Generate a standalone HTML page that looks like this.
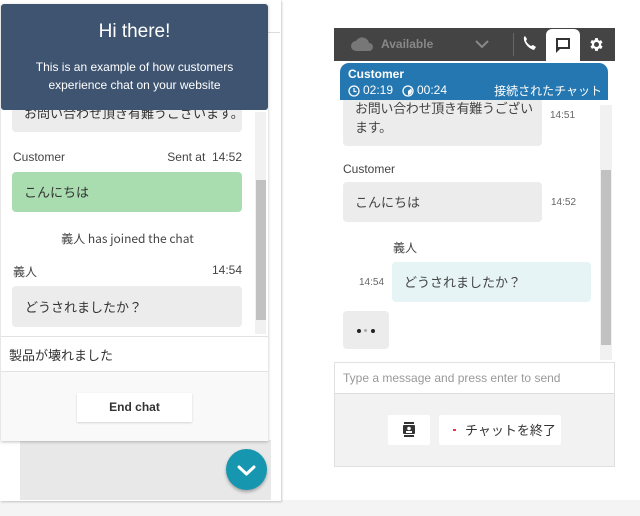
<!DOCTYPE html>
<html><head><meta charset="utf-8"><style>
*{box-sizing:border-box;margin:0;padding:0}
body{width:640px;height:516px;position:relative;background:#fff;font-family:"Liberation Sans","Noto Sans CJK JP",sans-serif;color:#333;overflow:hidden}
.a{position:absolute}
.jp{font-family:"Noto Sans CJK JP","Liberation Sans",sans-serif}
</style></head><body>
<div class="a" style="left:0;top:500px;width:640px;height:16px;background:#f4f4f4"></div>
<div class="a" style="left:0;top:0;width:281px;height:501px;background:#fff;box-shadow:1px 1px 2px rgba(0,0,0,.2)"></div>
<div class="a" style="left:240px;top:32px;width:40px;height:1px;background:#ddd"></div>
<div class="a" style="left:20px;top:440px;width:251px;height:60px;background:#e8e8e8"></div>
<!-- left widget -->
<div class="a" style="left:1px;top:4px;width:267px;height:437px;background:#fff;box-shadow:0 1px 3px rgba(0,0,0,.25)"></div>
<div class="a jp" style="left:12px;top:95px;width:230px;height:37px;background:#ececec;border-radius:4px;font-size:13px;padding:8px 12px;white-space:nowrap;overflow:hidden">お問い合わせ頂き有難うございます。</div>
<div class="a" style="left:255px;top:112px;width:11px;height:222px;background:#f1f1f1"></div>
<div class="a" style="left:256px;top:180px;width:10px;height:140px;background:#c1c1c1"></div>
<div class="a" style="left:13px;top:150px;font-size:12px;color:#444">Customer</div>
<div class="a" style="left:160px;top:150px;width:82px;text-align:right;font-size:12px;color:#444">Sent at&nbsp; 14:52</div>
<div class="a jp" style="left:12px;top:172px;width:230px;height:40px;background:#a9ddb0;border-radius:4px;font-size:13px;padding:10px 12px">こんにちは</div>
<div class="a jp" style="left:0;top:230px;width:255px;text-align:center;font-size:12px;color:#444">義人 has joined the chat</div>
<div class="a jp" style="left:13px;top:263px;font-size:12px;color:#444">義人</div>
<div class="a" style="left:160px;top:263px;width:82px;text-align:right;font-size:12px;color:#444">14:54</div>
<div class="a jp" style="left:12px;top:286px;width:230px;height:41px;background:#ececec;border-radius:4px;font-size:13px;padding:11px 13px">どうされましたか？</div>
<div class="a jp" style="left:1px;top:336px;width:267px;height:36px;background:#fff;border-top:1px solid #e2e2e2;border-bottom:1px solid #e2e2e2;font-size:13px;padding:8px 8px">製品が壊れました</div>
<div class="a" style="left:1px;top:372px;width:267px;height:69px;background:#f9f9f9"></div>
<div class="a" style="left:77px;top:393px;width:115px;height:29px;background:#fff;box-shadow:0 1px 2px rgba(0,0,0,.15);font-size:12px;font-weight:bold;text-align:center;line-height:29px">End chat</div>
<div class="a" style="left:1px;top:4px;width:267px;height:106px;background:#3f5470;border-radius:3px;color:#fff;text-align:center">
<div style="font-size:19px;margin-top:17px">Hi there!</div>
<div style="font-size:12px;line-height:18px;margin-top:15px">This is an example of how customers<br>experience chat on your website</div></div>
<div class="a" style="left:226px;top:449px;width:41px;height:41px;border-radius:50%;background:#1796b0;box-shadow:0 2px 3px rgba(0,0,0,.3)">
<svg width="41" height="41"><path d="M13 18l7.5 7 7.5-7" stroke="#fff" stroke-width="3" fill="none" stroke-linecap="round" stroke-linejoin="round"/></svg></div>
<!-- right panel -->
<div class="a" style="left:334px;top:28px;width:281px;height:439px;background:#f2f2f2;border:1px solid #e0e0e0"></div>
<div class="a" style="left:334px;top:28px;width:281px;height:33px;background:#444"></div>
<svg class="a" style="left:350px;top:35px" width="24" height="20"><path d="M6 16a5 5 0 0 1 0-10 7 7 0 0 1 13 2 4 4 0 0 1 0 8z" fill="#777"/></svg>
<div class="a" style="left:381px;top:37px;font-size:12px;font-weight:bold;color:#888">Available</div>
<svg class="a" style="left:474px;top:38px" width="16" height="12"><path d="M2 3l6 6 6-6" stroke="#888" stroke-width="2" fill="none"/></svg>
<div class="a" style="left:513px;top:33px;width:1px;height:23px;background:#666"></div>
<svg class="a" style="left:520px;top:34px" width="20" height="20"><path d="M4 3c-1 4 3 11 10 13l2-3-3-2-2 1c-2-1-4-3-5-5l1-2-2-3z" fill="#fff"/></svg>
<div class="a" style="left:546px;top:29px;width:34px;height:33px;background:#fff;border-radius:6px 6px 0 0"></div>
<svg class="a" style="left:554px;top:36px" width="18" height="18"><path d="M2 2h14v11H6l-4 4z" fill="#333"/><path d="M4 4h10v7H4z" fill="#fff"/></svg>
<svg class="a" style="left:588px;top:36px" width="17" height="17" viewBox="0 0 24 24"><path fill="#fff" d="M19.4 13a7.5 7.5 0 0 0 0-2l2.1-1.6-2-3.5-2.5 1a7 7 0 0 0-1.7-1L15 3h-4l-.4 2.7a7 7 0 0 0-1.7 1l-2.5-1-2 3.5L6.6 11a7.5 7.5 0 0 0 0 2l-2.1 1.6 2 3.5 2.5-1a7 7 0 0 0 1.7 1L11 21h4l.4-2.7a7 7 0 0 0 1.7-1l2.5 1 2-3.5zM13 15.5a3.5 3.5 0 1 1 0-7 3.5 3.5 0 0 1 0 7z" transform="translate(-1 0)"/></svg>
<div class="a" style="left:334px;top:61px;width:281px;height:301px;background:#fff"></div>
<div class="a jp" style="left:343px;top:98px;width:199px;height:48px;background:#ececec;border-radius:4px;font-size:13px;padding:0 12px;line-height:19px;color:#444;white-space:nowrap;letter-spacing:-0.3px">お問い合わせ頂き有難うござい<br>ます。</div>
<div class="a" style="left:550px;top:110px;font-size:10px;color:#666">14:51</div>
<div class="a" style="left:600px;top:105px;width:12px;height:255px;background:#f1f1f1"></div>
<div class="a" style="left:601px;top:170px;width:10px;height:175px;background:#c1c1c1"></div>
<div class="a" style="left:343px;top:162px;font-size:12px;color:#444">Customer</div>
<div class="a jp" style="left:343px;top:182px;width:199px;height:40px;background:#ececec;border-radius:4px;font-size:13px;padding:10px 12px;color:#444">こんにちは</div>
<div class="a" style="left:551px;top:197px;font-size:10px;color:#666">14:52</div>
<div class="a jp" style="left:393px;top:239px;font-size:12px;color:#444">義人</div>
<div class="a" style="left:359px;top:277px;font-size:10px;color:#666">14:54</div>
<div class="a jp" style="left:392px;top:262px;width:199px;height:40px;background:#e6f4f6;border-radius:4px;font-size:13px;padding:10px 12px;color:#444">どうされましたか？</div>
<div class="a" style="left:343px;top:311px;width:46px;height:38px;background:#ececec;border-radius:4px"></div>
<div class="a" style="left:357px;top:329px;width:4px;height:4px;border-radius:50%;background:#222"></div>
<div class="a" style="left:364px;top:329px;width:3px;height:3px;border-radius:50%;background:#aaa"></div>
<div class="a" style="left:371px;top:329px;width:4px;height:4px;border-radius:50%;background:#222"></div>
<div class="a" style="left:335px;top:362px;width:279px;height:32px;background:#fff;border-top:1px solid #e2e2e2;border-bottom:1px solid #ddd;font-size:12px;color:#999;padding:8px 8px">Type a message and press enter to send</div>
<div class="a" style="left:388px;top:415px;width:42px;height:30px;background:#fff;border-radius:2px"></div>
<svg class="a" style="left:402px;top:421px" width="14" height="18"><rect x="2" y="1" width="10" height="2" fill="#333"/><rect x="1" y="4" width="12" height="9" rx="1" fill="#333"/><circle cx="7" cy="7.5" r="1.8" fill="#fff"/><rect x="4" y="10" width="6" height="2" fill="#fff"/><rect x="2" y="14" width="10" height="2" fill="#333"/></svg>
<div class="a jp" style="left:439px;top:415px;width:122px;height:30px;background:#fff;border-radius:2px;font-size:13px;line-height:30px;padding-left:26px;color:#333">チャットを終了</div>
<div class="a" style="left:453px;top:429px;width:3px;height:2px;background:#e34"></div>
<div class="a" style="left:340px;top:63px;width:268px;height:37px;background:#2477b0;border-radius:9px 9px 0 0;color:#fff">
<div style="position:absolute;left:8px;top:4px;font-size:12px;font-weight:bold">Customer</div>
<svg style="position:absolute;left:8px;top:22px" width="12" height="12"><circle cx="6" cy="6" r="5" fill="none" stroke="#fff" stroke-width="1.3"/><path d="M6 3v3.5h2.5" stroke="#fff" stroke-width="1.2" fill="none"/></svg>
<div style="position:absolute;left:23px;top:20px;font-size:12px">02:19</div>
<svg style="position:absolute;left:62px;top:22px" width="12" height="12"><circle cx="6" cy="6" r="5" fill="none" stroke="#fff" stroke-width="1.3"/><path d="M6 6L9 3.5A4 4 0 0 1 6 10z" fill="#fff"/></svg>
<div style="position:absolute;left:77px;top:20px;font-size:12px">00:24</div>
<div class="jp" style="position:absolute;right:6px;top:19px;font-size:12px">接続されたチャット</div></div>
</body></html>
